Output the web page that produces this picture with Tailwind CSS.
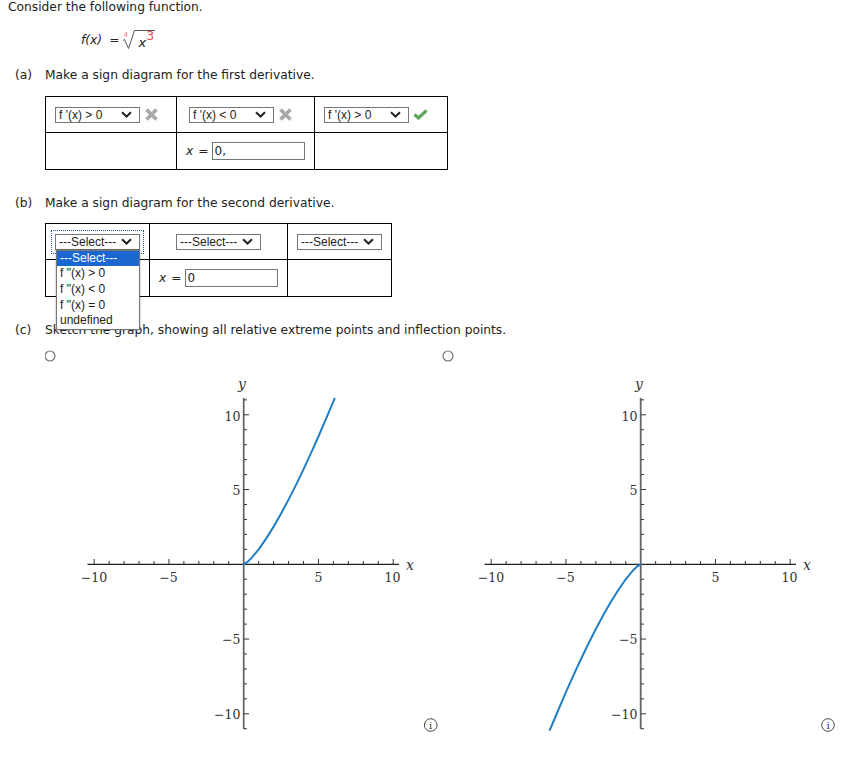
<!DOCTYPE html>
<html lang="en">
<head>
    <meta charset="UTF-8">
    <title>Sign diagrams</title>
    <script src="https://cdn.jsdelivr.net/npm/@tailwindcss/browser@4"></script>
</head>
<body class="bg-white text-[#222] font-['DejaVu_Sans',sans-serif] text-[12.25px]">
<div class="w-[855px] h-[762px] overflow-hidden">

    <p class="pl-[8px] pt-[1px] h-[14px] leading-[13px]">Consider the following function.</p>

    <!-- Formula -->
    <div class="flex items-center pl-[81px] mt-[12px] h-[26px]">
        <span class="italic pt-[3px]">f(x)</span>
        <span class="ml-[7px] mr-[3px] pt-[3px]">=</span>
        <span class="relative w-[36px] h-[26px]">
            <svg class="absolute left-0 top-0" width="36" height="26" viewBox="0 0 36 26">
                <path d="M1 14.5 L2.5 13.5 L6.5 22.5 L12.5 4.5 L33 4.5" fill="none" stroke="#555" stroke-width="1"/>
            </svg>
            <span class="absolute left-[1px] top-[5px] text-[7px] leading-[8px] text-[#f77]">4</span>
            <span class="absolute left-[16px] top-[9px] leading-[16px] italic text-[13px]">x</span>
            <span class="absolute left-[24px] top-[4px] text-[12px] leading-[12px] text-[#e44]">3</span>
        </span>
    </div>

    <!-- Part a -->
    <div class="flex h-[16px] leading-[16px] mt-[15px]">
        <span class="w-[45px] pl-[15px]">(a)</span>
        <span>Make a sign diagram for the first derivative.</span>
    </div>
    <table class="ml-[45px] mt-[13px] border-collapse table-fixed w-[402px]">
        <tr class="h-[36px]">
            <td class="w-[131px] border border-black pl-[9px]">
                <div class="flex items-center gap-[5px]">
                    <div class="flex items-center justify-between w-[85px] h-[16px] border border-[#767676] pl-[3px] pr-[7px] font-['Liberation_Sans',sans-serif] text-[12px]">
                        <span>f '(x) &gt; 0</span>
                        <svg width="11" height="7" viewBox="0 0 11 7"><path d="M1 1.2 L5.5 5.5 L10 1.2" fill="none" stroke="#222" stroke-width="2"/></svg>
                    </div>
                    <svg width="13" height="13" viewBox="0 0 13 13"><path d="M1.5 1.5 L11.5 11.5 M11.5 1.5 L1.5 11.5" stroke="#a9a9a9" stroke-width="3.8"/></svg>
                </div>
            </td>
            <td class="w-[138px] border border-black pl-[12px]">
                <div class="flex items-center gap-[5px]">
                    <div class="flex items-center justify-between w-[85px] h-[16px] border border-[#767676] pl-[3px] pr-[7px] font-['Liberation_Sans',sans-serif] text-[12px]">
                        <span>f '(x) &lt; 0</span>
                        <svg width="11" height="7" viewBox="0 0 11 7"><path d="M1 1.2 L5.5 5.5 L10 1.2" fill="none" stroke="#222" stroke-width="2"/></svg>
                    </div>
                    <svg width="13" height="13" viewBox="0 0 13 13"><path d="M1.5 1.5 L11.5 11.5 M11.5 1.5 L1.5 11.5" stroke="#a9a9a9" stroke-width="3.8"/></svg>
                </div>
            </td>
            <td class="w-[133px] border border-black pl-[9px]">
                <div class="flex items-center gap-[4px]">
                    <div class="flex items-center justify-between w-[85px] h-[16px] border border-[#767676] pl-[3px] pr-[7px] font-['Liberation_Sans',sans-serif] text-[12px]">
                        <span>f '(x) &gt; 0</span>
                        <svg width="11" height="7" viewBox="0 0 11 7"><path d="M1 1.2 L5.5 5.5 L10 1.2" fill="none" stroke="#222" stroke-width="2"/></svg>
                    </div>
                    <svg width="15" height="11" viewBox="0 0 15 11"><path d="M1.5 5.5 L5.5 9 L13.5 1.5" fill="none" stroke="#5fa55a" stroke-width="3.2"/></svg>
                </div>
            </td>
        </tr>
        <tr class="h-[37px]">
            <td class="border border-black"></td>
            <td class="border border-black pl-[9px]">
                <div class="flex items-center">
                    <span class="italic">x</span>
                    <span class="ml-[5px] mr-[3px]">=</span>
                    <div class="w-[93px] h-[18px] border border-[#767676] pl-[2px] leading-[16px] text-[12px]">0,</div>
                </div>
            </td>
            <td class="border border-black"></td>
        </tr>
    </table>

    <!-- Part b -->
    <div class="flex h-[16px] leading-[16px] mt-[25px]">
        <span class="w-[45px] pl-[15px]">(b)</span>
        <span>Make a sign diagram for the second derivative.</span>
    </div>
    <table class="ml-[45px] mt-[12px] border-collapse table-fixed w-[346px]">
        <tr class="h-[36px]">
            <td class="w-[104px] border border-black pl-[5px]">
                <div class="relative w-[93px] h-[24px] border border-dotted border-[#1a5fb4] flex items-center pl-[3px]">
                    <div class="flex items-center justify-between w-[85px] h-[16px] border border-[#767676] pl-[3px] pr-[7px] font-['Liberation_Sans',sans-serif] text-[12px]">
                        <span>---Select---</span>
                        <svg width="11" height="7" viewBox="0 0 11 7"><path d="M1 1.2 L5.5 5.5 L10 1.2" fill="none" stroke="#222" stroke-width="2"/></svg>
                    </div>
                    <!-- open dropdown -->
                    <div class="absolute left-[4px] top-[19px] w-[84px] h-[80px] z-10 bg-white border border-[#767676] shadow-[0_0_2px_rgba(0,0,0,0.35)] font-['Liberation_Sans',sans-serif] text-[12px] leading-[15.7px]">
                        <div class="bg-[#1a67d2] text-white pl-[3px]">---Select---</div>
                        <div class="pl-[3px]">f "(x) &gt; 0</div>
                        <div class="pl-[3px]">f "(x) &lt; 0</div>
                        <div class="pl-[3px]">f "(x) = 0</div>
                        <div class="pl-[3px]">undefined</div>
                    </div>
                </div>
            </td>
            <td class="w-[138px] border border-black pl-[26px]">
                <div class="flex items-center justify-between w-[85px] h-[16px] border border-[#767676] pl-[3px] pr-[7px] font-['Liberation_Sans',sans-serif] text-[12px]">
                    <span>---Select---</span>
                    <svg width="11" height="7" viewBox="0 0 11 7"><path d="M1 1.2 L5.5 5.5 L10 1.2" fill="none" stroke="#222" stroke-width="2"/></svg>
                </div>
            </td>
            <td class="w-[104px] border border-black pl-[9px]">
                <div class="flex items-center justify-between w-[85px] h-[16px] border border-[#767676] pl-[3px] pr-[7px] font-['Liberation_Sans',sans-serif] text-[12px]">
                    <span>---Select---</span>
                    <svg width="11" height="7" viewBox="0 0 11 7"><path d="M1 1.2 L5.5 5.5 L10 1.2" fill="none" stroke="#222" stroke-width="2"/></svg>
                </div>
            </td>
        </tr>
        <tr class="h-[37px]">
            <td class="border border-black"></td>
            <td class="border border-black pl-[9px]">
                <div class="flex items-center">
                    <span class="italic">x</span>
                    <span class="ml-[5px] mr-[3px]">=</span>
                    <div class="w-[93px] h-[18px] border border-[#767676] pl-[2px] leading-[16px] text-[12px]">0</div>
                </div>
            </td>
            <td class="border border-black"></td>
        </tr>
    </table>

    <!-- Part c -->
    <div class="flex h-[16px] leading-[16px] mt-[25px]">
        <span class="w-[45px] pl-[15px]">(c)</span>
        <span>Sketch the graph, showing all relative extreme points and inflection points.</span>
    </div>

    <div class="flex mt-[4px] pl-[45px]">
        <!-- Graph one -->
        <div class="w-[397px] shrink-0">
            <svg width="397" height="402" viewBox="0 0 397 402" class="block">
                <circle cx="5" cy="14" r="5" fill="#fff" stroke="#767676" stroke-width="1.2"/>
                <g transform="translate(0 30)">
                    <path d="M42.5 192.3 H354" stroke="#222" stroke-width="1.3"/>
                    <path d="M198.7 26 V357" stroke="#666" stroke-width="1.8"/>
                    <path d="M49.2 187 V192 M123.95 187 V192 M273.45 187 V192 M348.2 187 V192 M64.15 189 V192 M79.1 189 V192 M94.05 189 V192 M109 189 V192 M138.9 189 V192 M153.85 189 V192 M168.8 189 V192 M183.75 189 V192 M213.65 189 V192 M228.6 189 V192 M243.55 189 V192 M258.5 189 V192 M288.4 189 V192 M303.35 189 V192 M318.3 189 V192 M333.25 189 V192" stroke="#333" stroke-width="1"/>
                    <path d="M199 27.85 H202 M199 57.75 H202 M199 72.7 H202 M199 87.65 H202 M199 102.6 H202 M199 132.5 H202 M199 147.45 H202 M199 162.4 H202 M199 177.35 H202 M199 207.25 H202 M199 222.2 H202 M199 237.15 H202 M199 252.1 H202 M199 282 H202 M199 296.95 H202 M199 311.9 H202 M199 326.85 H202 M199 356.75 H202" stroke="#333" stroke-width="1"/>
                    <path d="M199 42.8 H204 M199 117.55 H204 M199 267.05 H204 M199 341.8 H204" stroke="#333" stroke-width="1"/>
                    <polyline fill="none" stroke="#1f7fc4" stroke-width="2" points="198.7,192.3 202.44,189.95 206.18,186.37 213.65,177.35 221.13,166.63 228.6,154.63 236.08,141.58 243.55,127.61 251.03,112.87 258.5,97.37 265.98,81.2 273.45,64.5 280.9,47.1 288.4,29.34 289.9,25.9"/>
                    <g font-family="DejaVu Serif, serif" font-size="12.5" fill="#333">
                        <text x="49" y="210" text-anchor="middle">−10</text>
                        <text x="123.5" y="210" text-anchor="middle">−5</text>
                        <text x="273.5" y="210" text-anchor="middle">5</text>
                        <text x="347.5" y="210" text-anchor="middle">10</text>
                        <text x="195.5" y="48.5" text-anchor="end">10</text>
                        <text x="195.5" y="123" text-anchor="end">5</text>
                        <text x="195.5" y="272" text-anchor="end">−5</text>
                        <text x="195.5" y="346.5" text-anchor="end">−10</text>
                        <text x="193" y="17" font-size="14" font-style="italic">y</text>
                        <text x="361" y="198" font-size="14" font-style="italic">x</text>
                    </g>
                    <circle cx="385.7" cy="353" r="6.3" fill="none" stroke="#333" stroke-width="0.9"/>
                    <text x="385.7" y="357" text-anchor="middle" font-family="DejaVu Serif, serif" font-size="10" fill="#333">i</text>
                </g>
            </svg>
        </div>
        <!-- Graph two -->
        <div class="w-[397px] shrink-0">
            <svg width="397" height="402" viewBox="0 0 397 402" class="block">
                <circle cx="6" cy="14" r="5" fill="#fff" stroke="#767676" stroke-width="1.2"/>
                <g transform="translate(0 30)">
                    <path d="M42.5 192.3 H354" stroke="#222" stroke-width="1.3"/>
                    <path d="M198.7 26 V357" stroke="#666" stroke-width="1.8"/>
                    <path d="M49.2 187 V192 M123.95 187 V192 M273.45 187 V192 M348.2 187 V192 M64.15 189 V192 M79.1 189 V192 M94.05 189 V192 M109 189 V192 M138.9 189 V192 M153.85 189 V192 M168.8 189 V192 M183.75 189 V192 M213.65 189 V192 M228.6 189 V192 M243.55 189 V192 M258.5 189 V192 M288.4 189 V192 M303.35 189 V192 M318.3 189 V192 M333.25 189 V192" stroke="#333" stroke-width="1"/>
                    <path d="M199 27.85 H202 M199 57.75 H202 M199 72.7 H202 M199 87.65 H202 M199 102.6 H202 M199 132.5 H202 M199 147.45 H202 M199 162.4 H202 M199 177.35 H202 M199 207.25 H202 M199 222.2 H202 M199 237.15 H202 M199 252.1 H202 M199 282 H202 M199 296.95 H202 M199 311.9 H202 M199 326.85 H202 M199 356.75 H202" stroke="#333" stroke-width="1"/>
                    <path d="M199 42.8 H204 M199 117.55 H204 M199 267.05 H204 M199 341.8 H204" stroke="#333" stroke-width="1"/>
                    <polyline fill="none" stroke="#1f7fc4" stroke-width="2" points="198.7,192.3 194.96,194.65 191.22,198.23 183.75,207.25 176.27,217.97 168.8,229.97 161.32,243.02 153.85,256.99 146.37,271.73 138.9,287.23 131.42,303.4 123.95,320.1 116.5,337.5 109,355.26 107.5,358.7"/>
                    <g font-family="DejaVu Serif, serif" font-size="12.5" fill="#333">
                        <text x="49" y="210" text-anchor="middle">−10</text>
                        <text x="123.5" y="210" text-anchor="middle">−5</text>
                        <text x="273.5" y="210" text-anchor="middle">5</text>
                        <text x="347.5" y="210" text-anchor="middle">10</text>
                        <text x="195.5" y="48.5" text-anchor="end">10</text>
                        <text x="195.5" y="123" text-anchor="end">5</text>
                        <text x="195.5" y="272" text-anchor="end">−5</text>
                        <text x="195.5" y="346.5" text-anchor="end">−10</text>
                        <text x="193" y="17" font-size="14" font-style="italic">y</text>
                        <text x="361" y="198" font-size="14" font-style="italic">x</text>
                    </g>
                    <circle cx="386" cy="353" r="6.3" fill="none" stroke="#333" stroke-width="0.9"/>
                    <text x="386" y="357" text-anchor="middle" font-family="DejaVu Serif, serif" font-size="10" fill="#333">i</text>
                </g>
            </svg>
        </div>
    </div>
</div>
</body>
</html>
